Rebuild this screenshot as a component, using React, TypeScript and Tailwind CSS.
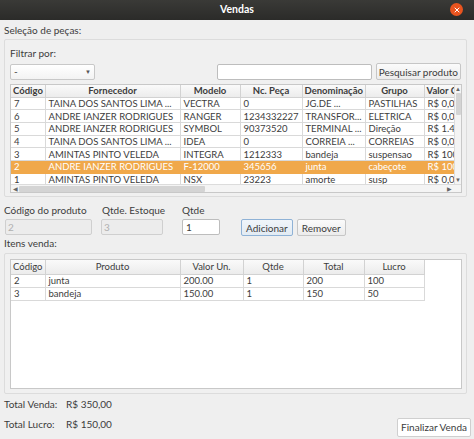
import { X } from 'lucide-react';

const pecas = [
  ['7', 'TAINA DOS SANTOS LIMA ...', 'VECTRA', '0', 'JG.DE ...', 'PASTILHAS', 'R$ 0,00'],
  ['6', 'ANDRE IANZER RODRIGUES', 'RANGER', '1234332227', 'TRANSFOR...', 'ELETRICA', 'R$ 0,00'],
  ['5', 'ANDRE IANZER RODRIGUES', 'SYMBOL', '90373520', 'TERMINAL ...', 'Direção', 'R$ 1.46'],
  ['4', 'TAINA DOS SANTOS LIMA ...', 'IDEA', '0', 'CORREIA ...', 'CORREIAS', 'R$ 0,00'],
  ['3', 'AMINTAS PINTO VELEDA', 'INTEGRA', '1212333', 'bandeja', 'suspensao', 'R$ 100'],
  ['2', 'ANDRE IANZER RODRIGUES', 'F-12000', '345656', 'junta', 'cabeçote', 'R$ 100'],
  ['1', 'AMINTAS PINTO VELEDA', 'NSX', '23223', 'amorte', 'susp', 'R$ 0,00'],
];

const pecaCols = [
  { label: 'Código', w: 34 },
  { label: 'Fornecedor', w: 135 },
  { label: 'Modelo', w: 60 },
  { label: 'Nc. Peça', w: 62 },
  { label: 'Denominação', w: 63 },
  { label: 'Grupo', w: 59 },
  { label: 'Valor Custo', w: 31 },
];

const itens = [
  ['2', 'junta', '200.00', '1', '200', '100'],
  ['3', 'bandeja', '150.00', '1', '150', '50'],
];

const itemCols = [
  { label: 'Código', w: 34 },
  { label: 'Produto', w: 135 },
  { label: 'Valor Un.', w: 63 },
  { label: 'Qtde', w: 60 },
  { label: 'Total', w: 61 },
  { label: 'Lucro', w: 60 },
];

function Button({ children, focus, tight }: { children: React.ReactNode; focus?: boolean; tight?: boolean }) {
  return (
    <button
      className={`h-[17px] rounded-[2px] border text-[10px] leading-none text-[#3c3c3c] whitespace-nowrap bg-gradient-to-b ${
        tight ? 'px-[2px]' : 'px-[4px]'
      } ${focus ? 'border-[#8fb2d6] from-[#f0f5fa] to-[#e2ebf3]' : 'border-[#c6c6c6] from-[#fbfbfb] to-[#ececec]'}`}
    >
      {children}
    </button>
  );
}

export default function App() {
  return (
    <div
      className="w-[474px] h-[439px] bg-[#efefef] text-[#3c3c3c] text-[10px] flex flex-col overflow-hidden whitespace-nowrap"
      style={{ fontFamily: 'Lato, "Noto Sans", sans-serif' }}
    >
      {/* Title bar */}
      <div className="h-[20px] shrink-0 bg-gradient-to-b from-[#3a3a37] to-[#2b2b29] flex items-center justify-center relative">
        <span className="text-white font-bold text-[10.5px]">Vendas</span>
        <span className="absolute right-[11px] top-[3px] w-[13px] h-[13px] rounded-full bg-[#e9541f] flex items-center justify-center">
          <X className="w-[8px] h-[8px] text-white" strokeWidth={3} />
        </span>
      </div>

      <div className="px-[4px] flex flex-col">
        <div className="h-[17px] mt-[1px] flex items-end">Seleção de peças:</div>

        {/* Group: seleção de peças */}
        <div className="mt-[1px] w-[463px] border border-[#dcdcdc] rounded-[2px] bg-[#f0f0f0] px-[5px] pb-[3px]">
          <div className="h-[22px] flex items-end pb-[1px]">Filtrar por:</div>
          <div className="flex items-center h-[19px]">
            <div className="w-[85px] h-[16px] border border-[#c8c8c8] rounded-[2px] bg-gradient-to-b from-white to-[#f3f3f3] flex items-center justify-between px-[3px]">
              <span>-</span>
              <span className="text-[6px] text-[#555]">▼</span>
            </div>
            <div className="ml-auto w-[155px] h-[16px] border border-[#bdbdbd] rounded-[2px] bg-white" />
            <div className="ml-[4px]">
              <Button tight>Pesquisar produto</Button>
            </div>
          </div>

          {/* Peças table */}
          <div className="mt-[3px] w-[452px] h-[109px] border border-[#c8c8c8] bg-white flex flex-col text-[9.5px]">
            <div className="flex flex-1 min-h-0">
              <div className="w-[444px] overflow-hidden">
                <table className="table-fixed border-collapse w-[444px]">
                  <colgroup>
                    {pecaCols.map((c) => (
                      <col key={c.label} style={{ width: c.w }} />
                    ))}
                  </colgroup>
                  <thead>
                    <tr className="h-[12px] bg-gradient-to-b from-[#fafafa] to-[#ececec]">
                      {pecaCols.map((c) => (
                        <th
                          key={c.label}
                          className="overflow-hidden font-bold text-center leading-[11px] border-r border-b border-[#d2d2d2] px-[2px]"
                        >
                          {c.label}
                        </th>
                      ))}
                    </tr>
                  </thead>
                  <tbody>
                    {pecas.map((r) => {
                      const sel = r[0] === '2';
                      return (
                        <tr key={r[0]} className={`h-[12.7px] ${sel ? 'bg-[#f0a84a] text-white' : ''}`}>
                          {r.map((v, i) => (
                            <td
                              key={i}
                              className={`overflow-hidden px-[3px] leading-[11px] border-r border-b ${
                                sel ? 'border-[#f0a84a]' : 'border-[#d9d9d9]'
                              }`}
                            >
                              {v}
                            </td>
                          ))}
                        </tr>
                      );
                    })}
                  </tbody>
                </table>
              </div>
              {/* vertical scrollbar */}
              <div className="w-[7px] border-l border-[#dcdcdc] bg-[#f4f4f4] flex flex-col items-center">
                <span className="text-[6px] leading-[8px] text-[#666]">▲</span>
                <div className="w-[5px] h-[22px] bg-[#d4d4d4] rounded-[1px]" />
                <div className="flex-1" />
                <span className="text-[6px] leading-[8px] text-[#666]">▼</span>
              </div>
            </div>
            {/* horizontal scrollbar */}
            <div className="h-[8px] border-t border-[#dcdcdc] bg-[#f4f4f4] flex items-center">
              <span className="text-[6px] leading-none text-[#666] w-[8px] text-center">◀</span>
              <div className="w-[186px] h-[6px] bg-[#d4d4d4] rounded-[1px]" />
              <div className="flex-1" />
              <span className="text-[6px] leading-none text-[#666] w-[8px] text-center mr-[8px]">▶</span>
            </div>
          </div>
        </div>

        {/* Produto fields */}
        <div className="mt-[5px] flex items-start">
          <div className="flex flex-col w-[97px] shrink-0">
            <span className="h-[16px] leading-[16px]">Código do produto</span>
            <div className="mt-[1px] ml-[1px] w-[87px] h-[16px] border border-[#cfcfcf] rounded-[2px] bg-[#ececec] text-[#b0b0b0] px-[2px] leading-[14px]">
              2
            </div>
          </div>
          <div className="flex flex-col w-[81px] shrink-0">
            <span className="h-[16px] leading-[16px] ml-[1px]">Qtde. Estoque</span>
            <div className="mt-[1px] w-[62px] h-[16px] border border-[#cfcfcf] rounded-[2px] bg-[#ececec] text-[#b0b0b0] px-[2px] leading-[14px]">
              3
            </div>
          </div>
          <div className="flex flex-col w-[59px] shrink-0">
            <span className="h-[16px] leading-[16px]">Qtde</span>
            <div className="mt-[1px] w-[38px] h-[16px] border border-[#bdbdbd] rounded-[2px] bg-white px-[3px] leading-[14px]">
              1
            </div>
          </div>
          <div className="mt-[17px] flex gap-[4px]">
            <Button focus>Adicionar</Button>
            <Button>Remover</Button>
          </div>
        </div>

        <div className="h-[15px] flex items-end">Itens venda:</div>

        {/* Group: itens venda */}
        <div className="mt-[2px] w-[463px] h-[141px] border border-[#dcdcdc] rounded-[2px] bg-[#f0f0f0] px-[5px] pt-[5px] pb-[4px]">
          <div className="w-[452px] h-full border border-[#c8c8c8] bg-white overflow-hidden text-[9.5px]">
            <table className="table-fixed border-collapse w-[413px]">
              <colgroup>
                {itemCols.map((c) => (
                  <col key={c.label} style={{ width: c.w }} />
                ))}
              </colgroup>
              <thead>
                <tr className="h-[14px] bg-gradient-to-b from-[#fafafa] to-[#ececec]">
                  {itemCols.map((c) => (
                    <th
                      key={c.label}
                      className="font-normal text-center leading-[12px] border-r border-b border-[#d2d2d2]"
                    >
                      {c.label}
                    </th>
                  ))}
                </tr>
              </thead>
              <tbody>
                {itens.map((r) => (
                  <tr key={r[0]} className="h-[13px]">
                    {r.map((v, i) => (
                      <td key={i} className="px-[3px] leading-[11px] border-r border-b border-[#d9d9d9]">
                        {v}
                      </td>
                    ))}
                  </tr>
                ))}
              </tbody>
            </table>
          </div>
        </div>

        {/* Totais */}
        <div className="flex items-center h-[20px]">
          <span className="w-[62px] shrink-0">Total Venda:</span>
          <span>R$ 350,00</span>
        </div>
        <div className="flex items-center h-[20px]">
          <span className="w-[62px] shrink-0">Total Lucro:</span>
          <span>R$ 150,00</span>
          <div className="ml-auto -mr-[1px] mt-[6px]">
            <button className="h-[19px] px-[3px] border border-[#cfcfcf] rounded-[2px] bg-white text-[10px] text-[#3c3c3c]">
              Finalizar Venda
            </button>
          </div>
        </div>
      </div>
    </div>
  );
}
